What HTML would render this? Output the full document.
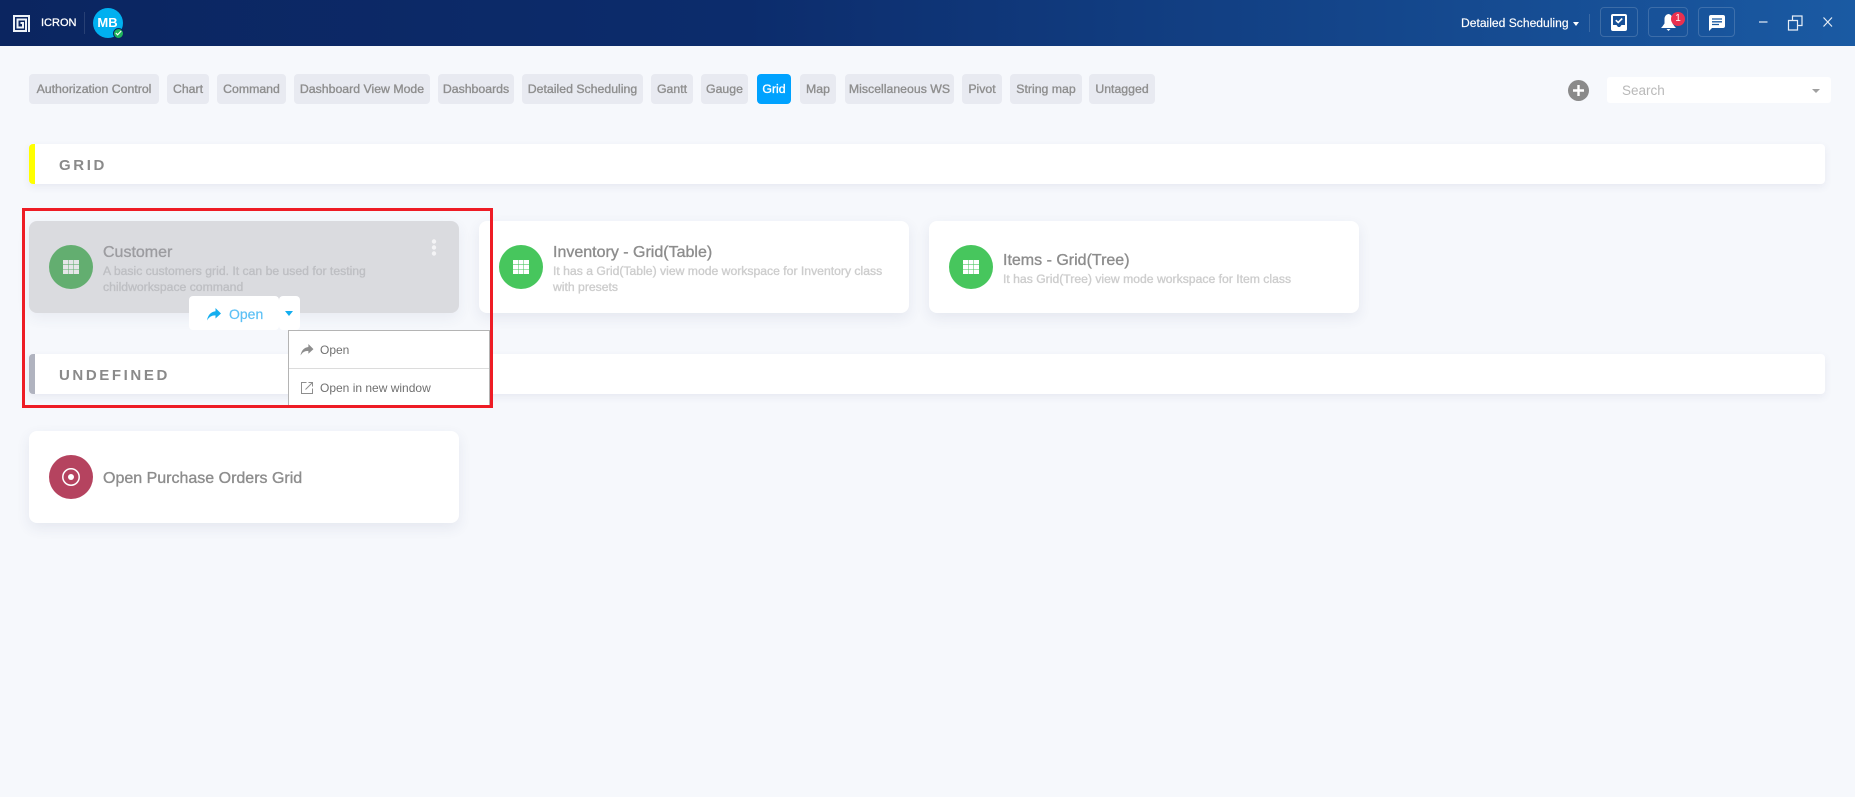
<!DOCTYPE html>
<html><head><meta charset="utf-8"><title>ICRON</title>
<style>
*{box-sizing:border-box}
html,body{margin:0;padding:0;width:1855px;height:797px;overflow:hidden;background:#f6f8fc;font-family:"Liberation Sans",sans-serif}
.a{position:absolute;white-space:nowrap}
.hdr{position:absolute;left:0;top:0;width:1855px;height:46px;background:linear-gradient(90deg,#0b2560 0%,#0c2c6c 40%,#1a5aa3 100%)}
.tag{position:absolute;top:74px;height:30px;line-height:31px;background:#e8eaf1;border-radius:4px;color:#8e8e8e;font-size:12.3px;font-weight:400;text-align:center;-webkit-text-stroke:.35px #8e8e8e;white-space:nowrap}
.tag.on{background:#00a2ff;color:#fff;-webkit-text-stroke:.35px #fff}
.bar{position:absolute;left:29px;width:1796px;height:40px;background:#fff;border-radius:4px;box-shadow:0 3px 8px rgba(60,70,110,.08);overflow:hidden}
.bar i{position:absolute;left:0;top:0;bottom:0;width:6px}
.bar span{position:absolute;left:30px;top:13px;font-size:15px;font-weight:700;color:#8a8a8a;letter-spacing:2.6px}
.card{position:absolute;width:430px;height:92px;background:#fff;border-radius:8px;box-shadow:0 5px 14px rgba(60,70,110,.09)}
.circ{position:absolute;left:20px;top:24px;width:44px;height:44px;border-radius:50%;background:#47c65d}
.circ svg{position:absolute;left:14px;top:15px}
.t{position:absolute;left:74px;font-size:16px;color:#8d8d8d;white-space:nowrap;-webkit-text-stroke:.35px #8d8d8d}
.d{position:absolute;left:74px;font-size:12.2px;line-height:16px;color:#cdcdcd;white-space:nowrap;-webkit-text-stroke:.35px #cdcdcd}
.hb{position:absolute;top:7px;height:30px;border:1px solid rgba(255,255,255,.16);border-radius:4px}
</style></head><body>
<div class="hdr"></div>
<svg class="a" style="left:13px;top:15px" width="17" height="17" viewBox="0 0 17 17" fill="none"><path d="M16 17V1H1V16H13V4.5H4.5V12.5H10V8H7.5" stroke-width="2" stroke="#eef2f8"/></svg>
<div class="a" style="left:41px;top:16px;font-size:11px;color:#fff;line-height:14px;-webkit-text-stroke:.3px #fff">ICRON</div>
<div class="a" style="left:84px;top:12px;width:1px;height:22px;background:rgba(255,255,255,.12)"></div>
<div class="a" style="left:93px;top:8px;width:30px;height:30px;border-radius:50%;background:#00b0f0;color:#fff;font-size:13px;font-weight:700;text-align:center;line-height:30px;padding-right:1px;height:30px">MB</div>
<div class="a" style="left:113px;top:27.5px;width:11px;height:11px;border-radius:50%;background:#20b45c;border:.5px solid #0b2560"></div>
<svg class="a" style="left:115px;top:30px" width="7" height="6" viewBox="0 0 7 6" fill="none"><path d="M.8 3L2.6 4.8 6.2 1" stroke="#fff" stroke-width="1.1"/></svg>

<div class="a" style="left:1461px;top:15px;font-size:12.1px;line-height:16px;color:#fff;-webkit-text-stroke:.15px #fff">Detailed Scheduling</div>
<div class="a" style="left:1573px;top:22px;border-left:3.5px solid transparent;border-right:3.5px solid transparent;border-top:4px solid #fff"></div>
<div class="a" style="left:1589px;top:14px;width:1px;height:18px;background:rgba(255,255,255,.15)"></div>
<div class="hb" style="left:1600px;width:38px"></div>
<div class="hb" style="left:1648px;width:40px"></div>
<div class="hb" style="left:1698px;width:37px"></div>
<svg class="a" style="left:1611px;top:14px" width="16" height="17" viewBox="0 0 16 17"><path d="M2 0H14Q16 0 16 2V15Q16 17 14 17H2Q0 17 0 15V2Q0 0 2 0ZM2 2V11H5.5L7 13H9L10.5 11H14V2Z" fill="#fff"/><path d="M4.8 6.2L7.2 8.5 11.2 4.5" fill="none" stroke="#fff" stroke-width="1.6"/></svg>
<svg class="a" style="left:1661px;top:14px" width="15" height="17" viewBox="0 0 15 17"><path d="M7.5 0C5.2.3 3.5 2.4 3.5 5V9.5L1.2 12.8 0 14H15L13.8 12.8 11.5 9.5V5C11.5 2.4 9.8.3 7.5 0Z" fill="#fff"/><path d="M5.5 15H9.5L7.5 17Z" fill="#fff"/></svg>
<div class="a" style="left:1671px;top:12px;width:14px;height:14px;border-radius:50%;background:#e9304f;color:#fff;font-size:10px;line-height:14px;text-align:center">1</div>
<svg class="a" style="left:1709px;top:15px" width="16" height="16" viewBox="0 0 16 16"><path d="M2 0H14Q16 0 16 2V11Q16 13 14 13H3L0 16V2Q0 0 2 0Z" fill="#fff"/><path d="M3 4H13M3 6.8H13M3 9.5H10" stroke="#1a5aa0" stroke-width="1.3"/></svg>
<svg class="a" style="left:1755px;top:11px" width="85" height="22" viewBox="0 0 85 22" fill="none" stroke="#e6edf6" stroke-width="1.2"><path d="M4 11H12.5"/><path d="M33.5 9.5H42.5V19H33.5ZM37.5 9.5V5H47V14.5H42.5"/><path d="M68.5 6.5L77 15.5M77 6.5L68.5 15.5"/></svg>

<div class="tag" style="left:29px;width:130px">Authorization Control</div>
<div class="tag" style="left:167px;width:42px">Chart</div>
<div class="tag" style="left:217px;width:69px">Command</div>
<div class="tag" style="left:294px;width:136px">Dashboard View Mode</div>
<div class="tag" style="left:438px;width:76px">Dashboards</div>
<div class="tag" style="left:522px;width:121px">Detailed Scheduling</div>
<div class="tag" style="left:651px;width:42px">Gantt</div>
<div class="tag" style="left:701px;width:47px">Gauge</div>
<div class="tag on" style="left:757px;width:34px">Grid</div>
<div class="tag" style="left:800px;width:36px">Map</div>
<div class="tag" style="left:845px;width:109px">Miscellaneous WS</div>
<div class="tag" style="left:962px;width:40px">Pivot</div>
<div class="tag" style="left:1010px;width:72px">String map</div>
<div class="tag" style="left:1089px;width:66px">Untagged</div>

<div class="a" style="left:1568px;top:80px;width:21px;height:21px;border-radius:50%;background:#8a8a8a"></div>
<svg class="a" style="left:1568px;top:80px" width="21" height="21" viewBox="0 0 21 21"><path d="M10.5 5V16M5 10.5H16" stroke="#fff" stroke-width="2.4"/></svg>
<div class="a" style="left:1607px;top:77px;width:224px;height:26px;background:#fff;border-radius:3px"></div>
<div class="a" style="left:1622px;top:83px;font-size:13.5px;line-height:16px;color:#b9b9b9">Search</div>
<div class="a" style="left:1812px;top:89px;border-left:4px solid transparent;border-right:4px solid transparent;border-top:4px solid #a0a0a0"></div>

<div class="bar" style="top:144px"><i style="background:#ffff00"></i><span>GRID</span></div>
<div class="bar" style="top:354px"><i style="background:#b0b3bf"></i><span>UNDEFINED</span></div>

<div class="card" style="left:29px;top:221px;background:#dadbdf;box-shadow:0 5px 14px rgba(60,70,110,.07)">
 <div class="circ" style="background:#63ae70"><svg width="16" height="14" viewBox="0 0 16 14" fill="#e6e6e8"><rect width="5" height="4.3"/><rect x="5.5" width="5" height="4.3"/><rect x="11" width="5" height="4.3"/><rect y="4.9" width="5" height="4.3"/><rect x="5.5" y="4.9" width="5" height="4.3"/><rect x="11" y="4.9" width="5" height="4.3"/><rect y="9.7" width="5" height="4.3"/><rect x="5.5" y="9.7" width="5" height="4.3"/><rect x="11" y="9.7" width="5" height="4.3"/></svg></div>
 <div class="t" style="top:23px;color:#9c9ca0;-webkit-text-stroke:.35px #9c9ca0">Customer</div>
 <div class="d" style="top:42px;color:#bebfc3;-webkit-text-stroke:.35px #bebfc3">A basic customers grid. It can be used for testing<br>childworkspace command</div>
 <svg class="a" style="left:402px;top:18px" width="6" height="17" viewBox="0 0 6 17" fill="#f4f4f6"><circle cx="3" cy="2.5" r="2.2"/><circle cx="3" cy="8.5" r="2.2"/><circle cx="3" cy="14.5" r="2.2"/></svg>
</div>
<div class="card" style="left:479px;top:221px">
 <div class="circ"><svg width="16" height="14" viewBox="0 0 16 14" fill="#fff"><rect width="5" height="4.3"/><rect x="5.5" width="5" height="4.3"/><rect x="11" width="5" height="4.3"/><rect y="4.9" width="5" height="4.3"/><rect x="5.5" y="4.9" width="5" height="4.3"/><rect x="11" y="4.9" width="5" height="4.3"/><rect y="9.7" width="5" height="4.3"/><rect x="5.5" y="9.7" width="5" height="4.3"/><rect x="11" y="9.7" width="5" height="4.3"/></svg></div>
 <div class="t" style="top:23px">Inventory - Grid(Table)</div>
 <div class="d" style="top:42px">It has a Grid(Table) view mode workspace for Inventory class<br>with presets</div>
</div>
<div class="card" style="left:929px;top:221px">
 <div class="circ"><svg width="16" height="14" viewBox="0 0 16 14" fill="#fff"><rect width="5" height="4.3"/><rect x="5.5" width="5" height="4.3"/><rect x="11" width="5" height="4.3"/><rect y="4.9" width="5" height="4.3"/><rect x="5.5" y="4.9" width="5" height="4.3"/><rect x="11" y="4.9" width="5" height="4.3"/><rect y="9.7" width="5" height="4.3"/><rect x="5.5" y="9.7" width="5" height="4.3"/><rect x="11" y="9.7" width="5" height="4.3"/></svg></div>
 <div class="t" style="top:31px">Items - Grid(Tree)</div>
 <div class="d" style="top:50px">It has Grid(Tree) view mode workspace for Item class</div>
</div>
<div class="card" style="left:29px;top:431px">
 <div class="circ" style="background:#b5435f"><svg style="left:12px;top:12px" width="20" height="20" viewBox="0 0 20 20" fill="none"><circle cx="10" cy="10" r="8.2" stroke="#fff" stroke-width="1.5"/><circle cx="10" cy="10" r="3" fill="#fff"/></svg></div>
 <div class="t" style="top:39px;">Open Purchase Orders Grid</div>
</div>

<div class="a" style="left:189px;top:296px;width:90px;height:34px;background:#fff;border-radius:4px"></div>
<div class="a" style="left:279px;top:296px;width:21px;height:34px;background:#fff;border-radius:4px"></div>
<svg class="a" style="left:207px;top:308px" width="14" height="13" viewBox="0 0 14 13"><path d="M8.5 0L14 5.5 8.5 10.5V7.4C4.5 7.4 2 9 0 12.5 .7 7.5 3.5 3.8 8.5 3.2Z" fill="#14aeef"/></svg>
<div class="a" style="left:229px;top:306px;font-size:14px;line-height:17px;color:#5cc0f5;-webkit-text-stroke:.2px #5cc0f5">Open</div>
<div class="a" style="left:284.5px;top:311px;border-left:4.5px solid transparent;border-right:4.5px solid transparent;border-top:5px solid #14aeef"></div>

<div class="a" style="left:288px;top:330px;width:202px;height:77px;background:#fff;border:1px solid #b4b4b4;border-bottom:none"></div>
<div class="a" style="left:289px;top:368px;width:200px;height:1px;background:#dcdcdc"></div>
<svg class="a" style="left:300px;top:344px" width="14" height="12" viewBox="0 0 14 13"><path d="M8.5 0L14 5.5 8.5 10.5V7.4C4.5 7.4 2 9 0 12.5 .7 7.5 3.5 3.8 8.5 3.2Z" fill="#8e8e8e"/></svg>
<div class="a" style="left:320px;top:342px;font-size:12px;line-height:16px;color:#707070">Open</div>
<svg class="a" style="left:301px;top:382px" width="12" height="12" viewBox="0 0 12 12" fill="none" stroke="#8e8e8e" stroke-width="1"><path d="M5.5 .5H.5V11.5H11.5V6.5"/><path d="M4.5 7.5L11.5 .5M7.5 .5H11.5V4.5"/></svg>
<div class="a" style="left:320px;top:380px;font-size:12px;line-height:16px;color:#707070">Open in new window</div>

<div class="a" style="left:22px;top:208px;width:471px;height:200px;border:3px solid #ee1c25"></div>
</body></html>
